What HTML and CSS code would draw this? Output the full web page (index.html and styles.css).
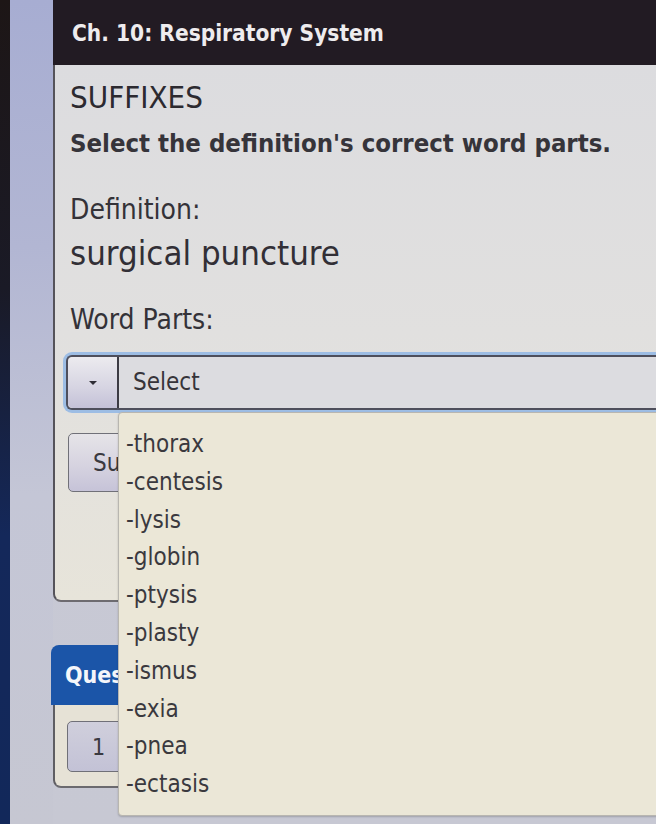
FILE: index.html
```html
<!DOCTYPE html>
<html lang="en">
<head>
<meta charset="utf-8">
<title>Ch. 10: Respiratory System</title>
<link rel="stylesheet" href="styles.css">
</head>
<body>
<div class="screen">
  <div class="edge"></div>
  <div class="rail"></div>
  <div class="main">
    <header class="topbar">Ch. 10: Respiratory System</header>
    <section class="panel">
      <h1 class="title">SUFFIXES</h1>
      <p class="instr">Select the definition's correct word parts.</p>
      <div class="label def-label">Definition:</div>
      <div class="definition">surgical puncture</div>
      <div class="label parts-label">Word Parts:</div>
      <div class="select-wrap">
        <div class="select">
          <div class="select-btn"><span class="caret"></span></div>
          <div class="select-text">Select</div>
        </div>
        <ul class="menu">
          <li>-thorax</li>
          <li>-centesis</li>
          <li>-lysis</li>
          <li>-globin</li>
          <li>-ptysis</li>
          <li>-plasty</li>
          <li>-ismus</li>
          <li>-exia</li>
          <li>-pnea</li>
          <li>-ectasis</li>
        </ul>
      </div>
      <div class="submit-row">
        <button class="btn submit">Submit</button>
      </div>
    </section>
    <section class="qpanel">
      <div class="qhead">Questions</div>
      <div class="qbody">
        <button class="btn num">1</button>
      </div>
    </section>
  </div>
</div>
</body>
</html>
```

FILE: styles.css
```css
* { box-sizing: border-box; }
html, body {
  margin: 0;
  padding: 0;
  width: 656px;
  height: 824px;
  overflow: hidden;
  background: #b9bac6;
  font-family: "DejaVu Sans Condensed", "DejaVu Sans", sans-serif;
  color: #313036;
}
.screen {
  display: flex;
  width: 656px;
  height: 824px;
  overflow: hidden;
}
.edge {
  width: 10px;
  flex: none;
  background: linear-gradient(#1d1616 0%, #1a1a26 35%, #14285a 65%, #12285a 100%);
}
.rail {
  width: 43px;
  flex: none;
  background: linear-gradient(#a7add2 0%, #b2b6d3 30%, #c4c6d6 60%, #c6c7d2 100%);
}
.main {
  flex: 1;
  min-width: 0;
  display: flex;
  flex-direction: column;
  background: linear-gradient(#c8cad8 0%, #c7c8d3 100%);
}
.topbar {
  height: 65px;
  flex: none;
  background: #221b23;
  color: #eeecee;
  font-weight: bold;
  font-size: 22.5px;
  line-height: 30px;
  padding: 18px 0 0 19px;
  width: 620px;
  white-space: nowrap;
}
.panel {
  width: 640px;
  height: 537px;
  flex: none;
  background: linear-gradient(#dcdcdf 0%, #e1e0df 50%, #e7e4da 100%);
  border-left: 2px solid #55535a;
  border-bottom: 2px solid #6d6b70;
  border-bottom-left-radius: 8px;
  padding: 14px 0 0 15px;
}
.title {
  margin: 0;
  font-size: 31px;
  font-weight: normal;
  line-height: 36px;
  color: #2c2a30;
}
.instr {
  margin: 12px 0 0 0;
  font-size: 25.5px;
  font-weight: bold;
  line-height: 32px;
  color: #36343a;
  white-space: nowrap;
}
.label {
  font-size: 28px;
  line-height: 34px;
  color: #343238;
}
.def-label { margin-top: 34px; }
.definition {
  font-size: 34.5px;
  line-height: 42px;
  margin-top: 5px;
  color: #322f36;
}
.parts-label { margin-top: 29px; }
.select-wrap {
  position: relative;
  margin-top: 18px;
  margin-left: -4px;
}
.select {
  display: flex;
  height: 55px;
  border: 2px solid #4e4f5c;
  border-right: none;
  border-radius: 6px 0 0 6px;
  box-shadow: 0 0 0 3px #9dbde4;
  background: #dcdce0;
}
.select-btn {
  width: 51px;
  flex: none;
  border-right: 2px solid #3c3b44;
  border-radius: 5px 0 0 5px;
  background: linear-gradient(#ecebef 0%, #d6d4e2 60%, #c4c1d8 100%);
  display: flex;
  align-items: center;
  justify-content: center;
}
.caret {
  width: 0;
  height: 0;
  border-left: 4px solid transparent;
  border-right: 4px solid transparent;
  border-top: 4px solid #2e2d35;
}
.select-text {
  flex: 1;
  font-size: 24px;
  line-height: 51px;
  padding-left: 14px;
  color: #36343a;
}
.menu {
  position: absolute;
  left: 52px;
  top: 57px;
  width: 560px;
  height: 404px;
  margin: 0;
  padding: 13px 0 0 7px;
  list-style: none;
  background: #ebe7d7;
  border: 1px solid #b8b6b0;
  border-radius: 4px 0 0 4px;
  box-shadow: 0 1px 2px rgba(0,0,0,0.2);
  z-index: 2;
}
.menu li {
  font-size: 24px;
  line-height: 37.8px;
  color: #3a393e;
}
.submit-row {
  margin-top: 23px;
  margin-left: -2px;
}
.btn {
  font-family: inherit;
  color: #3a3940;
  border: 1px solid #707078;
  border-radius: 5px;
  background: linear-gradient(#e6e4e8 0%, #d6d3e0 55%, #c6c3d8 100%);
}
.submit {
  width: 110px;
  height: 59px;
  font-size: 24px;
  padding: 0 0 0 24px;
  text-align: left;
}
.qpanel {
  margin-top: 43px;
  width: 640px;
  flex: none;
}
.qhead {
  height: 60px;
  background: #1b55a8;
  color: #f4f6fa;
  font-weight: bold;
  font-size: 23px;
  padding: 17px 0 0 14px;
  border-radius: 8px 0 0 0;
  margin-left: -2px;
}
.qbody {
  height: 83px;
  background: #e6e2d6;
  border-left: 2px solid #5f5e63;
  border-bottom: 2px solid #6b6a6f;
  border-bottom-left-radius: 8px;
  padding: 16px 0 0 12px;
}
.num {
  width: 80px;
  height: 51px;
  font-size: 23px;
  text-align: left;
  padding: 0 0 0 24px;
  background: linear-gradient(#d0cfdc 0%, #c3c2d6 100%);
}
```
